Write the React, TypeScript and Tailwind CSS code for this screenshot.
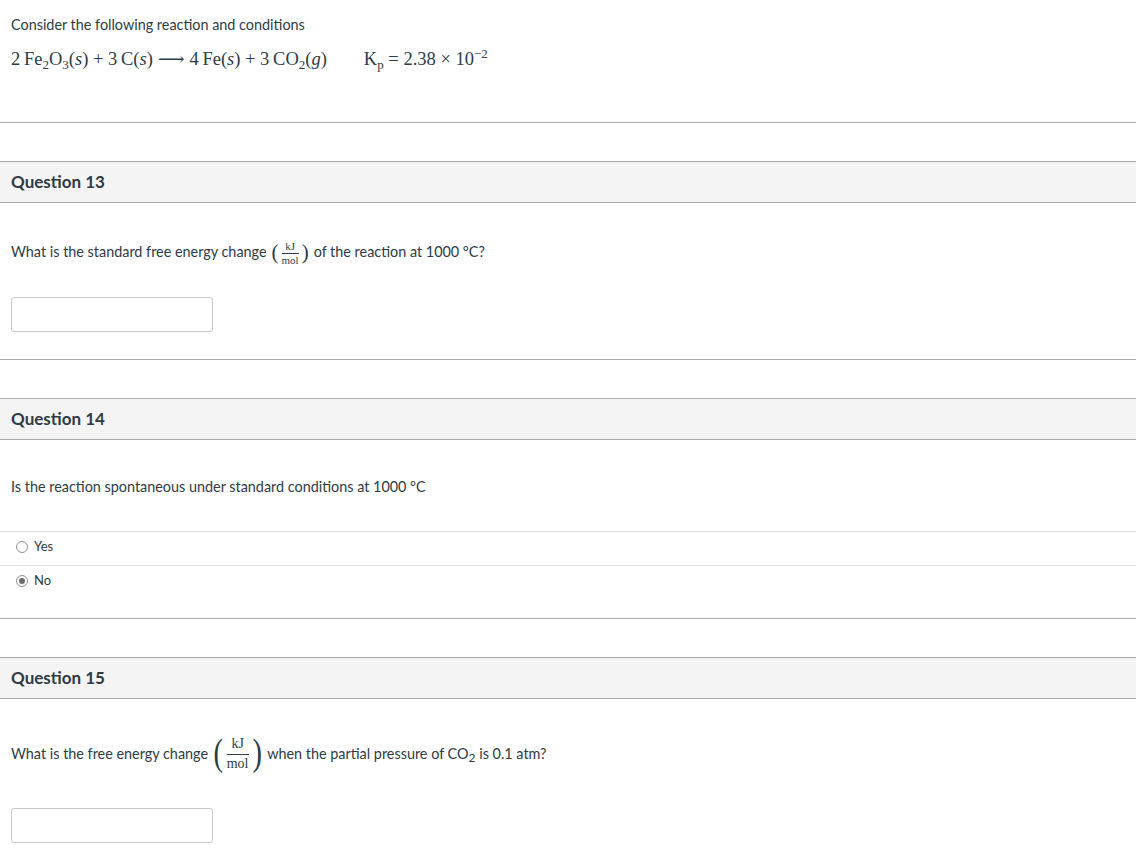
import type { ReactNode } from "react";

const serif = "font-['Liberation_Serif','DejaVu_Serif',serif]";

function Frac({ big = false }: { big?: boolean }) {
  return (
    <span className={`inline-flex items-center align-middle ${serif} text-[#2d3b45] ${big ? "" : "mx-[5px]"}`}>
      <span className={big ? "text-[38px] font-light leading-none -mt-[5px] scale-x-75" : "text-[21px] leading-none -mt-[2px]"}>(</span>
      <span className={`inline-flex flex-col items-center ${big ? "mx-[2px] text-[14px]" : "mx-[3px] text-[11px]"} leading-none`}>
        <span className={big ? "pb-[3px] px-[1px]" : "pb-[1px] px-[1px]"}>kJ</span>
        <span className="border-t border-[#2d3b45] w-full" />
        <span className={big ? "pt-[2px]" : "pt-[1px]"}>mol</span>
      </span>
      <span className={big ? "text-[38px] font-light leading-none -mt-[5px] scale-x-75" : "text-[21px] leading-none -mt-[2px]"}>)</span>
    </span>
  );
}

function Header({ n }: { n: number }) {
  return (
    <div className="mt-[38px] border-y border-[#a9a9a9] bg-[#f4f4f4] h-[42px] flex items-center px-[11px]">
      <h2 className="text-[17px] font-bold text-[#2d3b45] -mt-[1px]">Question {n}</h2>
    </div>
  );
}

function AnswerBox() {
  return <div className="ml-[11px] w-[202px] h-[35px] border border-[#c8c8c8] rounded-[3px] bg-white" />;
}

function Radio({ label, checked }: { label: string; checked?: boolean }) {
  return (
    <div className="h-[34px] border-t border-[#e0e0e0] flex items-center pb-[3px] pl-[16px] gap-[6px] text-[13px]">
      <span className="w-[12px] h-[12px] rounded-full border border-[#8e8e8e] flex items-center justify-center bg-white">
        {checked && <span className="w-[6px] h-[6px] rounded-full bg-[#6b6b6b]" />}
      </span>
      <span>{label}</span>
    </div>
  );
}

function Sub({ children }: { children: ReactNode }) {
  return <sub className="text-[13px] relative top-[4px]">{children}</sub>;
}

export default function App() {
  return (
    <div className="w-[1136px] h-[856px] overflow-hidden bg-white text-[#2d3b45] font-['Lato','Open_Sans',sans-serif] text-[14.4px]">
      <div className="border-b border-[#a9a9a9] h-[123px] px-[11px] pt-[15px]">
        <p className="leading-[20px]">Consider the following reaction and conditions</p>
        <p className={`${serif} text-[18.5px] mt-[12px] leading-[24px] whitespace-nowrap`}>
          2&thinsp;Fe<Sub>2</Sub>O<Sub>3</Sub>(<i>s</i>) + 3&thinsp;C(<i>s</i>)
          <span className="mx-[5px]">⟶</span>4&thinsp;Fe(<i>s</i>) + 3&thinsp;CO<Sub>2</Sub>(<i>g</i>)
          <span className="ml-[37px]">
            K<Sub>p</Sub> = 2.38 × 10<sup className="text-[13px] relative -top-[7px]">−2</sup>
          </span>
        </p>
      </div>

      <Header n={13} />
      <div className="border-b border-[#a9a9a9] h-[157px]">
        <p className="px-[11px] pt-[38px] h-[94px] leading-[22px]">
          What is the standard free energy change<Frac />of the reaction at 1000 °C?
        </p>
        <AnswerBox />
      </div>

      <Header n={14} />
      <div className="border-b border-[#a9a9a9] h-[179px]">
        <p className="px-[11px] pt-[36px] h-[91px] leading-[22px]">
          Is the reaction spontaneous under standard conditions at 1000 °C
        </p>
        <Radio label="Yes" />
        <Radio label="No" checked />
      </div>

      <Header n={15} />
      <div>
        <div className="px-[11px] mt-[36px] mb-[35px] h-[38px] flex items-center gap-[4px] whitespace-nowrap">
          <span>What is the free energy change</span>
          <Frac big />
          <span>
            when the partial pressure of CO<sub className="text-[12px] relative top-[3px]">2</sub> is 0.1 atm?
          </span>
        </div>
        <AnswerBox />
      </div>
    </div>
  );
}
